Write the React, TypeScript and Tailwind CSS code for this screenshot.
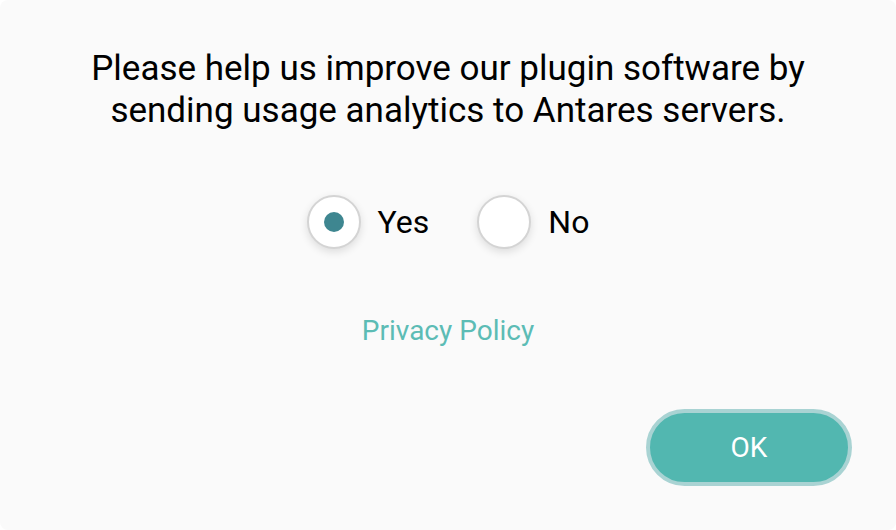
import React, { useState } from "react";

export default function App() {
  const [choice, setChoice] = useState<"yes" | "no">("yes");
  return (
    <div className="w-[896px] h-[530px] bg-white">
      <div
        className="w-full h-full bg-[#fafafa] rounded-[8px] flex flex-col items-center text-black"
        style={{ fontFamily: "Roboto, 'Liberation Sans', sans-serif" }}
      >
        <p className="mt-[48px] text-[35px] leading-[42px] text-center whitespace-nowrap">
          Please help us improve our plugin software by
          <br />
          sending usage analytics to Antares servers.
        </p>
        <div className="mt-[63px] flex items-center">
          <button
            onClick={() => setChoice("yes")}
            className="flex items-center"
          >
            <span className="w-[54px] h-[54px] rounded-full bg-white border-2 border-[#d4d4d4] shadow-[0_3px_8px_rgba(0,0,0,0.12)] flex items-center justify-center">
              {choice === "yes" && (
                <span className="w-[20px] h-[20px] rounded-full bg-[#3e8690]" />
              )}
            </span>
            <span className="ml-[17px] text-[32px] leading-none">Yes</span>
          </button>
          <button
            onClick={() => setChoice("no")}
            className="flex items-center ml-[48px]"
          >
            <span className="w-[54px] h-[54px] rounded-full bg-white border-2 border-[#d4d4d4] shadow-[0_3px_8px_rgba(0,0,0,0.12)] flex items-center justify-center">
              {choice === "no" && (
                <span className="w-[20px] h-[20px] rounded-full bg-[#3e8690]" />
              )}
            </span>
            <span className="ml-[17px] text-[32px] leading-none">No</span>
          </button>
        </div>
        <a className="mt-[68px] text-[28px] leading-none text-[#5cbcb5] cursor-pointer">
          Privacy Policy
        </a>
        <div className="w-full flex justify-end pr-[44px] mt-[64px]">
          <button className="w-[206px] h-[77px] rounded-full bg-[#52b7b0] border-[4px] border-[#a9d3d3] text-white text-[28px]">
            OK
          </button>
        </div>
      </div>
    </div>
  );
}
